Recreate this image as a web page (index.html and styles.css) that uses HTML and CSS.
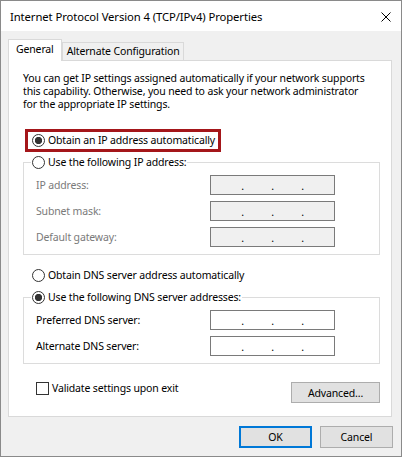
FILE: index.html
```html
<!DOCTYPE html>
<html lang="en">
<head>
<meta charset="utf-8">
<title>Internet Protocol Version 4 (TCP/IPv4) Properties</title>
<link rel="stylesheet" href="styles.css">
</head>
<body>
<div class="window">
  <div class="titlebar">
    <span class="title">Internet Protocol Version 4 (TCP/IPv4) Properties</span>
    <svg class="close" width="10" height="10" viewBox="0 0 10 10" aria-hidden="true">
      <path d="M0.5 0.5 L9.5 9.5 M9.5 0.5 L0.5 9.5" stroke="#000" stroke-width="1" fill="none"/>
    </svg>
  </div>
  <div class="client">
    <div class="tabs">
      <div class="tab tab-active">General</div>
      <div class="tab tab-alt">Alternate Configuration</div>
    </div>
    <div class="panel">
      <p class="intro">You can get IP settings assigned automatically if your network supports<br>this capability. Otherwise, you need to ask your network administrator<br>for the appropriate IP settings.</p>

      <div class="highlight">
        <div class="radio-row"><span class="radio radio-checked"></span><span>Obtain an IP address automatically</span></div>
      </div>

      <fieldset class="group group-ip">
        <legend class="legend"><span class="radio-row"><span class="radio"></span><span>Use the following IP address:</span></span></legend>
        <div class="fields fields-disabled">
          <span class="field-label">IP address:</span>
          <span class="ipbox ipbox-disabled"><span class="dot">.</span><span class="dot">.</span><span class="dot">.</span></span>
          <span class="field-label">Subnet mask:</span>
          <span class="ipbox ipbox-disabled"><span class="dot">.</span><span class="dot">.</span><span class="dot">.</span></span>
          <span class="field-label">Default gateway:</span>
          <span class="ipbox ipbox-disabled"><span class="dot">.</span><span class="dot">.</span><span class="dot">.</span></span>
        </div>
      </fieldset>

      <div class="radio-row dns-auto"><span class="radio"></span><span>Obtain DNS server address automatically</span></div>

      <fieldset class="group group-dns">
        <legend class="legend"><span class="radio-row"><span class="radio radio-checked"></span><span>Use the following DNS server addresses:</span></span></legend>
        <div class="fields">
          <span class="field-label">Preferred DNS server:</span>
          <span class="ipbox"><span class="dot">.</span><span class="dot">.</span><span class="dot">.</span></span>
          <span class="field-label">Alternate DNS server:</span>
          <span class="ipbox"><span class="dot">.</span><span class="dot">.</span><span class="dot">.</span></span>
        </div>
      </fieldset>

      <div class="footer-row">
        <div class="check-row"><span class="checkbox"></span><span>Validate settings upon exit</span></div>
        <div class="btn btn-advanced">Advanced...</div>
      </div>
    </div>
    <div class="buttons">
      <div class="btn btn-ok">OK</div>
      <div class="btn">Cancel</div>
    </div>
  </div>
</div>
</body>
</html>
```

FILE: styles.css
```css
* {
  box-sizing: border-box;
}

html, body {
  margin: 0;
  padding: 0;
  background: #ffffff;
}

body {
  font-family: "Noto Sans", "Open Sans", sans-serif;
  font-size: 10.5px;
  letter-spacing: -0.15px;
  color: #000;
}

.window {
  width: 402px;
  height: 457px;
  border: 1px solid #8a8a8a;
  display: flex;
  flex-direction: column;
  background: #f0f0f0;
  overflow: hidden;
}

.titlebar {
  height: 30px;
  flex: 0 0 30px;
  background: #ffffff;
  display: flex;
  align-items: center;
  justify-content: space-between;
  padding: 0 10px 0 9px;
}

.title {
  font-size: 11.3px;
  letter-spacing: -0.1px;
  line-height: 16px;
  padding-top: 1px;
}

.close {
  display: block;
  margin-top: 1px;
}

.client {
  flex: 1;
  padding: 8px 8px 0 7px;
  display: flex;
  flex-direction: column;
}

.tabs {
  display: flex;
  align-items: flex-end;
  height: 21px;
}

.tab {
  height: 18px;
  padding: 0 5px 0 4px;
  border: 1px solid #d9d9d9;
  border-bottom: none;
  background: #f0f0f0;
  line-height: 17px;
}

.tab-alt {
  padding: 0 3px 0 4px;
}

.tab-active {
  position: relative;
  z-index: 1;
  height: 22px;
  margin-bottom: -1px;
  padding: 0 7px;
  background: #ffffff;
  line-height: 19px;
}

.panel {
  height: 357px;
  margin-right: 1px;
  border: 1px solid #d9d9d9;
  background: #ffffff;
  padding: 11px 0 0 14px;
  display: flex;
  flex-direction: column;
}

.intro {
  margin: 0;
  line-height: 13px;
  white-space: nowrap;
}

.radio-row {
  display: flex;
  align-items: center;
  gap: 3px;
  height: 15px;
  line-height: 15px;
  white-space: nowrap;
}

.radio {
  width: 13px;
  height: 13px;
  flex: 0 0 13px;
  border: 1px solid #333333;
  border-radius: 50%;
  background: #ffffff;
}

.radio-checked {
  background: radial-gradient(circle, #333333 0 3.4px, #ffffff 3.9px);
}

.highlight {
  width: 196px;
  height: 23px;
  margin: 18px 0 0 2px;
  border: 3px solid #a4161a;
  padding: 0 0 0 4px;
  display: flex;
  align-items: center;
}

.group {
  width: 357px;
  margin: 0;
  padding: 6px 0 7px 12px;
  border: 1px solid #dcdcdc;
  min-width: 0;
}

.group-ip {
  margin-top: 3px;
}

.group-dns {
  margin-top: 7px;
}

.legend {
  padding: 0 1px;
  margin-left: -5px;
  height: 14px;
  display: flex;
  align-items: center;
}

.fields {
  display: grid;
  grid-template-columns: 174px 125px;
  grid-auto-rows: 20px;
  row-gap: 6px;
  align-items: center;
}

.fields-disabled .field-label {
  color: #7a7a7a;
}

.ipbox {
  height: 20px;
  border: 1px solid #7a7a7a;
  background: #ffffff;
  display: flex;
  justify-content: center;
  gap: 27px;
  line-height: 18px;
  padding-top: 1px;
}

.ipbox-disabled {
  background: #f0f0f0;
}

.dot {
  width: 3px;
  text-align: center;
}

.dns-auto {
  margin: 13px 0 0 9px;
}

.footer-row {
  display: flex;
  justify-content: space-between;
  align-items: flex-start;
  width: 357px;
  margin-top: 17px;
}

.check-row {
  display: flex;
  align-items: center;
  gap: 3px;
  margin-left: 13px;
  height: 15px;
  line-height: 15px;
}

.checkbox {
  width: 13px;
  height: 13px;
  border: 1px solid #333333;
  background: #ffffff;
}

.btn {
  width: 73px;
  height: 22px;
  border: 1px solid #adadad;
  background: #e1e1e1;
  display: flex;
  align-items: center;
  justify-content: center;
  line-height: 16px;
}

.btn-advanced {
  width: 89px;
  height: 21px;
  margin-top: 1px;
}

.btn-ok {
  border: 2px solid #0078d7;
}

.buttons {
  display: flex;
  justify-content: flex-end;
  gap: 8px;
  margin-top: 9px;
}
```
